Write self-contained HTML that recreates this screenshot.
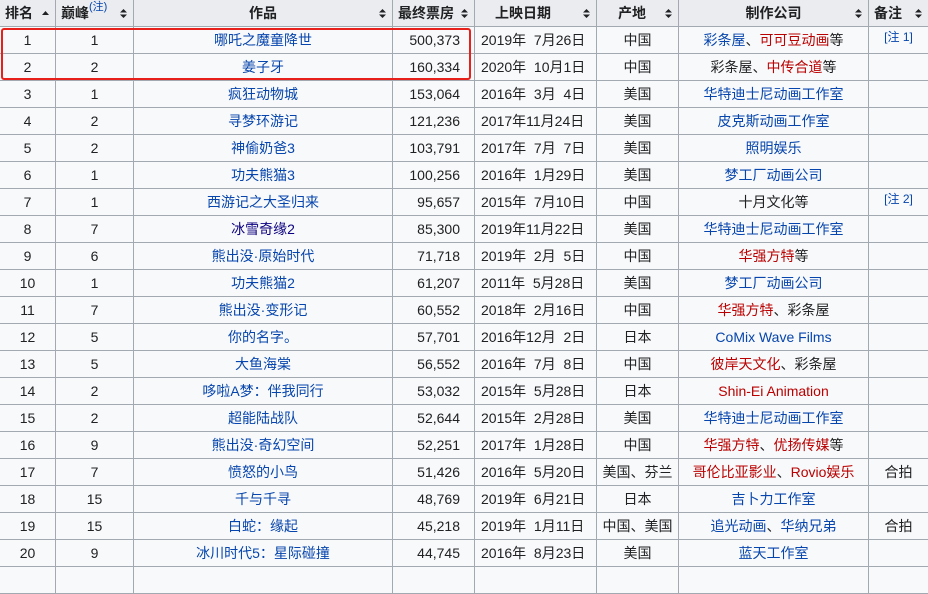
<!DOCTYPE html>
<html><head><meta charset="utf-8"><style>
*{box-sizing:border-box;margin:0;padding:0}
body{width:928px;height:571px;overflow:hidden;background:#f8f9fa;font-family:"Liberation Sans","Noto Sans CJK SC",sans-serif;font-size:14px;color:#202122;position:relative}
.r{display:flex;height:27px;border-bottom:1px solid #a2a9b1}
.h{height:27px;background:#eaecf0;font-weight:bold}
.c{border-right:1px solid #a2a9b1;height:26px;line-height:26px;text-align:center;white-space:nowrap;overflow:hidden;position:relative}
.c:last-child{border-right:none}
.w1{width:56px}.w2{width:78px}.w3{width:259px}.w4{width:82px;text-align:right;padding-right:14px}.w5{width:122px;text-align:left;padding-left:6px}.w6{width:82px}.w7{width:190px}.w8{width:59px}
.h .c{text-align:left;padding-left:5px}
.h .w3,.h .w7{text-align:center;padding-left:0}
.h .w5{padding-left:20px}.h .w6{padding-left:21px}
.s{position:absolute;right:5px;top:8px;width:9px;height:11px}
a{color:#0645ad;text-decoration:none}
.v{color:#0b0080}
.red{color:#ba0000}
sup{font-size:11px;color:#0645ad;font-weight:normal;vertical-align:8px;line-height:0}
.n{font-size:12px;color:#0645ad;vertical-align:top;line-height:20px}
#box{position:absolute;left:1px;top:28px;width:470px;height:52px;border:2px solid #e8201c;border-radius:3px}
</style></head><body>
<div class="r h">
<div class="c w1">排名<svg class="s" viewBox="0 0 9 11"><path d="M1 7h7L4.5 3z" fill="#202122"/></svg></div>
<div class="c w2">巅峰<sup>(注)</sup><svg class="s" viewBox="0 0 9 11"><path d="M1 4.5h7L4.5 1zM1 6.5h7L4.5 10z" fill="#202122"/></svg></div>
<div class="c w3">作品<svg class="s" viewBox="0 0 9 11"><path d="M1 4.5h7L4.5 1zM1 6.5h7L4.5 10z" fill="#202122"/></svg></div>
<div class="c w4" style="text-align:left;padding-left:5px">最终票房<svg class="s" viewBox="0 0 9 11"><path d="M1 4.5h7L4.5 1zM1 6.5h7L4.5 10z" fill="#202122"/></svg></div>
<div class="c w5">上映日期<svg class="s" viewBox="0 0 9 11"><path d="M1 4.5h7L4.5 1zM1 6.5h7L4.5 10z" fill="#202122"/></svg></div>
<div class="c w6">产地<svg class="s" viewBox="0 0 9 11"><path d="M1 4.5h7L4.5 1zM1 6.5h7L4.5 10z" fill="#202122"/></svg></div>
<div class="c w7">制作公司<svg class="s" viewBox="0 0 9 11"><path d="M1 4.5h7L4.5 1zM1 6.5h7L4.5 10z" fill="#202122"/></svg></div>
<div class="c w8">备注<svg class="s" viewBox="0 0 9 11"><path d="M1 4.5h7L4.5 1zM1 6.5h7L4.5 10z" fill="#202122"/></svg></div>
</div>
<div class="r"><div class="c w1">1</div><div class="c w2">1</div><div class="c w3"><a>哪吒之魔童降世</a></div><div class="c w4">500,373</div><div class="c w5">2019年&nbsp; 7月26日</div><div class="c w6">中国</div><div class="c w7"><a>彩条屋</a>、<span class="red">可可豆动画</span>等</div><div class="c w8"><span class="n">[注 1]</span></div></div>
<div class="r"><div class="c w1">2</div><div class="c w2">2</div><div class="c w3"><a>姜子牙</a></div><div class="c w4">160,334</div><div class="c w5">2020年&nbsp; 10月1日</div><div class="c w6">中国</div><div class="c w7">彩条屋、<span class="red">中传合道</span>等</div><div class="c w8"></div></div>
<div class="r"><div class="c w1">3</div><div class="c w2">1</div><div class="c w3"><a>疯狂动物城</a></div><div class="c w4">153,064</div><div class="c w5">2016年&nbsp; 3月&nbsp; 4日</div><div class="c w6">美国</div><div class="c w7"><a>华特迪士尼动画工作室</a></div><div class="c w8"></div></div>
<div class="r"><div class="c w1">4</div><div class="c w2">2</div><div class="c w3"><a>寻梦环游记</a></div><div class="c w4">121,236</div><div class="c w5">2017年11月24日</div><div class="c w6">美国</div><div class="c w7"><a>皮克斯动画工作室</a></div><div class="c w8"></div></div>
<div class="r"><div class="c w1">5</div><div class="c w2">2</div><div class="c w3"><a>神偷奶爸3</a></div><div class="c w4">103,791</div><div class="c w5">2017年&nbsp; 7月&nbsp; 7日</div><div class="c w6">美国</div><div class="c w7"><a>照明娱乐</a></div><div class="c w8"></div></div>
<div class="r"><div class="c w1">6</div><div class="c w2">1</div><div class="c w3"><a>功夫熊猫3</a></div><div class="c w4">100,256</div><div class="c w5">2016年&nbsp; 1月29日</div><div class="c w6">美国</div><div class="c w7"><a>梦工厂动画公司</a></div><div class="c w8"></div></div>
<div class="r"><div class="c w1">7</div><div class="c w2">1</div><div class="c w3"><a>西游记之大圣归来</a></div><div class="c w4">95,657</div><div class="c w5">2015年&nbsp; 7月10日</div><div class="c w6">中国</div><div class="c w7">十月文化等</div><div class="c w8"><span class="n">[注 2]</span></div></div>
<div class="r"><div class="c w1">8</div><div class="c w2">7</div><div class="c w3"><a class="v">冰雪奇缘2</a></div><div class="c w4">85,300</div><div class="c w5">2019年11月22日</div><div class="c w6">美国</div><div class="c w7"><a>华特迪士尼动画工作室</a></div><div class="c w8"></div></div>
<div class="r"><div class="c w1">9</div><div class="c w2">6</div><div class="c w3"><a>熊出没·原始时代</a></div><div class="c w4">71,718</div><div class="c w5">2019年&nbsp; 2月&nbsp; 5日</div><div class="c w6">中国</div><div class="c w7"><span class="red">华强方特</span>等</div><div class="c w8"></div></div>
<div class="r"><div class="c w1">10</div><div class="c w2">1</div><div class="c w3"><a>功夫熊猫2</a></div><div class="c w4">61,207</div><div class="c w5">2011年&nbsp; 5月28日</div><div class="c w6">美国</div><div class="c w7"><a>梦工厂动画公司</a></div><div class="c w8"></div></div>
<div class="r"><div class="c w1">11</div><div class="c w2">7</div><div class="c w3"><a>熊出没·变形记</a></div><div class="c w4">60,552</div><div class="c w5">2018年&nbsp; 2月16日</div><div class="c w6">中国</div><div class="c w7"><span class="red">华强方特</span>、彩条屋</div><div class="c w8"></div></div>
<div class="r"><div class="c w1">12</div><div class="c w2">5</div><div class="c w3"><a>你的名字。</a></div><div class="c w4">57,701</div><div class="c w5">2016年12月&nbsp; 2日</div><div class="c w6">日本</div><div class="c w7"><a>CoMix Wave Films</a></div><div class="c w8"></div></div>
<div class="r"><div class="c w1">13</div><div class="c w2">5</div><div class="c w3"><a>大鱼海棠</a></div><div class="c w4">56,552</div><div class="c w5">2016年&nbsp; 7月&nbsp; 8日</div><div class="c w6">中国</div><div class="c w7"><span class="red">彼岸天文化</span>、彩条屋</div><div class="c w8"></div></div>
<div class="r"><div class="c w1">14</div><div class="c w2">2</div><div class="c w3"><a>哆啦A梦：伴我同行</a></div><div class="c w4">53,032</div><div class="c w5">2015年&nbsp; 5月28日</div><div class="c w6">日本</div><div class="c w7"><span class="red">Shin-Ei Animation</span></div><div class="c w8"></div></div>
<div class="r"><div class="c w1">15</div><div class="c w2">2</div><div class="c w3"><a>超能陆战队</a></div><div class="c w4">52,644</div><div class="c w5">2015年&nbsp; 2月28日</div><div class="c w6">美国</div><div class="c w7"><a>华特迪士尼动画工作室</a></div><div class="c w8"></div></div>
<div class="r"><div class="c w1">16</div><div class="c w2">9</div><div class="c w3"><a>熊出没·奇幻空间</a></div><div class="c w4">52,251</div><div class="c w5">2017年&nbsp; 1月28日</div><div class="c w6">中国</div><div class="c w7"><span class="red">华强方特</span>、<span class="red">优扬传媒</span>等</div><div class="c w8"></div></div>
<div class="r"><div class="c w1">17</div><div class="c w2">7</div><div class="c w3"><a>愤怒的小鸟</a></div><div class="c w4">51,426</div><div class="c w5">2016年&nbsp; 5月20日</div><div class="c w6">美国、芬兰</div><div class="c w7"><span class="red">哥伦比亚影业</span>、<span class="red">Rovio娱乐</span></div><div class="c w8">合拍</div></div>
<div class="r"><div class="c w1">18</div><div class="c w2">15</div><div class="c w3"><a>千与千寻</a></div><div class="c w4">48,769</div><div class="c w5">2019年&nbsp; 6月21日</div><div class="c w6">日本</div><div class="c w7"><a>吉卜力工作室</a></div><div class="c w8"></div></div>
<div class="r"><div class="c w1">19</div><div class="c w2">15</div><div class="c w3"><a>白蛇：缘起</a></div><div class="c w4">45,218</div><div class="c w5">2019年&nbsp; 1月11日</div><div class="c w6">中国、美国</div><div class="c w7"><a>追光动画</a>、<a>华纳兄弟</a></div><div class="c w8">合拍</div></div>
<div class="r"><div class="c w1">20</div><div class="c w2">9</div><div class="c w3"><a>冰川时代5：星际碰撞</a></div><div class="c w4">44,745</div><div class="c w5">2016年&nbsp; 8月23日</div><div class="c w6">美国</div><div class="c w7"><a>蓝天工作室</a></div><div class="c w8"></div></div>
<div class="r"><div class="c w1"></div><div class="c w2"></div><div class="c w3"></div><div class="c w4"></div><div class="c w5"></div><div class="c w6"></div><div class="c w7"></div><div class="c w8"></div></div>
<div id="box"></div>
</body></html>
